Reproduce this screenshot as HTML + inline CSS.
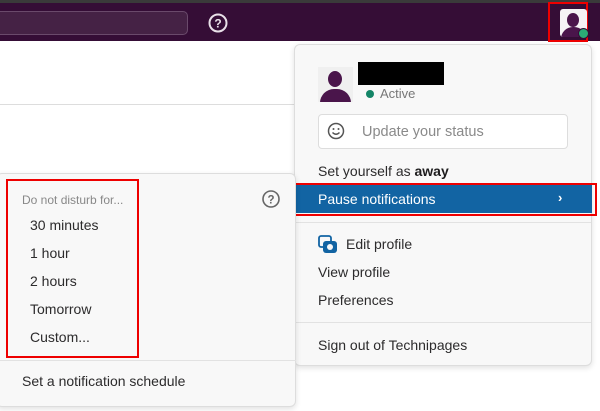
<!DOCTYPE html>
<html><head><style>
*{margin:0;padding:0;box-sizing:border-box}
body{width:600px;height:411px;overflow:hidden;background:#fff;font-family:"Liberation Sans",sans-serif;position:relative;color:#1d1c1d}
.a{position:absolute}
.t{position:absolute;font-size:14px;line-height:18px;color:#2c2b2c}
</style></head><body>
<div class="a" style="left:0;top:0;width:600px;height:3px;background:#3a3a3a"></div>
<div class="a" style="left:0;top:3px;width:600px;height:38px;background:#350d36"></div>
<div class="a" style="left:-10px;top:11px;width:198px;height:24px;border:1px solid #6a4a6b;border-radius:5px;background:#452245"></div>
<svg class="a" style="left:207px;top:12px" width="22" height="22" viewBox="0 0 22 22"><circle cx="11" cy="11" r="8.5" fill="none" stroke="#e8e0e8" stroke-width="2"/><text x="11" y="15.5" font-size="12" font-weight="bold" text-anchor="middle" fill="#e8e0e8" font-family="Liberation Sans">?</text></svg>
<div class="a" style="left:548px;top:2px;width:40px;height:40px;border:2px solid #e00"></div>
<div class="a" style="left:560px;top:9px;width:27px;height:28px;background:#f5f3f5;border-radius:3px;overflow:hidden">
<div class="a" style="left:7px;top:4px;width:12px;height:14px;border-radius:50%;background:#4a154b"></div>
<div class="a" style="left:1px;top:18px;width:25px;height:16px;border-radius:12px 12px 0 0;background:#4a154b"></div></div>
<div class="a" style="left:578px;top:28px;width:11px;height:11px;border-radius:50%;background:#2bac76;border:1px solid #350d36"></div>
<div class="a" style="left:0;top:104px;width:296px;height:1px;background:#ddd"></div>

<div class="a" style="left:294px;top:44px;width:298px;height:322px;background:#f8f8f8;border:1px solid #ddd;border-radius:6px;box-shadow:0 2px 6px rgba(0,0,0,.12)"></div>
<div class="a" style="left:318px;top:67px;width:35px;height:35px;background:#f0f0f0;overflow:hidden">
<div class="a" style="left:10px;top:4px;width:14px;height:16px;border-radius:50%;background:#4a154b"></div>
<div class="a" style="left:2px;top:22px;width:31px;height:20px;border-radius:14px 14px 0 0;background:#4a154b"></div></div>
<div class="a" style="left:358px;top:62px;width:86px;height:23px;background:#000"></div>
<div class="a" style="left:366px;top:90px;width:8px;height:8px;border-radius:50%;background:#148567"></div>
<div class="t" style="left:380px;top:85px;font-size:13px;color:#777">Active</div>
<div class="a" style="left:318px;top:114px;width:250px;height:35px;background:#fff;border:1px solid #ddd;border-radius:4px"></div>
<svg class="a" style="left:327px;top:122px" width="18" height="18" viewBox="0 0 18 18"><circle cx="9" cy="9" r="7.5" fill="none" stroke="#555" stroke-width="1.5"/><circle cx="6.5" cy="7" r="1" fill="#555"/><circle cx="11.5" cy="7" r="1" fill="#555"/><path d="M5.5 10.5q3.5 3.5 7 0" fill="none" stroke="#555" stroke-width="1.4"/></svg>
<div class="t" style="left:362px;top:123px;color:#8a8a8a;font-size:14.5px">Update your status</div>
<div class="t" style="left:318px;top:162px">Set yourself as <b style="color:#1d1c1d">away</b></div>
<div class="a" style="left:294px;top:185px;width:298px;height:28px;background:#1264a3"></div>
<div class="a" style="left:292px;top:183px;width:305px;height:33px;border:2px solid #e00"></div>
<div class="t" style="left:318px;top:190px;color:#fff">Pause notifications</div>
<div class="t" style="left:558px;top:189px;color:#fff;font-weight:bold;font-size:13px">›</div>
<div class="a" style="left:295px;top:222px;width:296px;height:1px;background:#e2e2e2"></div>
<svg class="a" style="left:318px;top:234px" width="20" height="20" viewBox="0 0 20 20"><rect x="1" y="2" width="12" height="11" rx="2" fill="none" stroke="#1264a3" stroke-width="1.8"/><rect x="5" y="7" width="14" height="12" rx="3" fill="#1264a3"/><circle cx="12" cy="13" r="3" fill="#f8f8f8"/></svg>
<div class="t" style="left:346px;top:235px">Edit profile</div>
<div class="t" style="left:318px;top:263px">View profile</div>
<div class="t" style="left:318px;top:291px">Preferences</div>
<div class="a" style="left:295px;top:322px;width:296px;height:1px;background:#e2e2e2"></div>
<div class="t" style="left:318px;top:336px">Sign out of Technipages</div>

<div class="a" style="left:-4px;top:173px;width:300px;height:234px;background:#f8f8f8;border:1px solid #ddd;border-radius:6px;box-shadow:0 2px 6px rgba(0,0,0,.12)"></div>
<div class="a" style="left:6px;top:179px;width:133px;height:179px;border:2px solid #e00"></div>
<div class="t" style="left:22px;top:191px;font-size:12px;color:#888">Do not disturb for...</div>
<svg class="a" style="left:261px;top:189px" width="20" height="20" viewBox="0 0 20 20"><circle cx="10" cy="10" r="8" fill="none" stroke="#666" stroke-width="1.6"/><text x="10" y="14.5" font-size="11.5" font-weight="bold" text-anchor="middle" fill="#666" font-family="Liberation Sans">?</text></svg>
<div class="t" style="left:30px;top:216px">30 minutes</div>
<div class="t" style="left:30px;top:244px">1 hour</div>
<div class="t" style="left:30px;top:272px">2 hours</div>
<div class="t" style="left:30px;top:300px">Tomorrow</div>
<div class="t" style="left:30px;top:328px">Custom...</div>
<div class="a" style="left:0;top:360px;width:296px;height:1px;background:#e2e2e2"></div>
<div class="t" style="left:22px;top:372px">Set a notification schedule</div>
</body></html>
